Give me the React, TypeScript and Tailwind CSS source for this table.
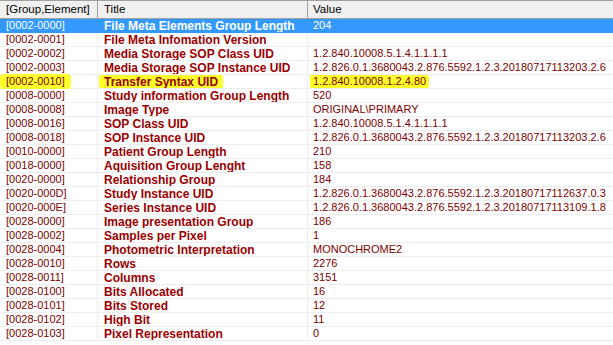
const rows: [string, string, string][] = [
  ["[0002-0000]", "File Meta Elements Group Length", "204"],
  ["[0002-0001]", "File Meta Infomation Version", ""],
  ["[0002-0002]", "Media Storage SOP Class UID", "1.2.840.10008.5.1.4.1.1.1.1"],
  ["[0002-0003]", "Media Storage SOP Instance UID", "1.2.826.0.1.3680043.2.876.5592.1.2.3.20180717113203.2.6"],
  ["[0002-0010]", "Transfer Syntax UID", "1.2.840.10008.1.2.4.80"],
  ["[0008-0000]", "Study information Group Length", "520"],
  ["[0008-0008]", "Image Type", "ORIGINAL\\PRIMARY"],
  ["[0008-0016]", "SOP Class UID", "1.2.840.10008.5.1.4.1.1.1.1"],
  ["[0008-0018]", "SOP Instance UID", "1.2.826.0.1.3680043.2.876.5592.1.2.3.20180717113203.2.6"],
  ["[0010-0000]", "Patient Group Length", "210"],
  ["[0018-0000]", "Aquisition Group Lenght", "158"],
  ["[0020-0000]", "Relationship Group", "184"],
  ["[0020-000D]", "Study Instance UID", "1.2.826.0.1.3680043.2.876.5592.1.2.3.20180717112637.0.3"],
  ["[0020-000E]", "Series Instance UID", "1.2.826.0.1.3680043.2.876.5592.1.2.3.20180717113109.1.8"],
  ["[0028-0000]", "Image presentation Group", "186"],
  ["[0028-0002]", "Samples per Pixel", "1"],
  ["[0028-0004]", "Photometric Interpretation", "MONOCHROME2"],
  ["[0028-0010]", "Rows", "2276"],
  ["[0028-0011]", "Columns", "3151"],
  ["[0028-0100]", "Bits Allocated", "16"],
  ["[0028-0101]", "Bits Stored", "12"],
  ["[0028-0102]", "High Bit", "11"],
  ["[0028-0103]", "Pixel Representation", "0"],
];

const font = { fontFamily: '"Liberation Sans", Arial, sans-serif' };

export default function App() {
  return (
    <div className="w-[613px] h-[345px] overflow-hidden bg-white text-[11px] leading-none" style={font}>
      {/* Header */}
      <div className="flex h-[19px] border-t border-[#a0a0a0] border-b border-b-[#a0a0a0] bg-[#f0f0f0] text-black text-[11.5px]">
        <div className="w-[98px] flex items-center pl-[6px] border-r border-[#a0a0a0]">[Group,Element]</div>
        <div className="w-[210px] flex items-center pl-[6px] border-r border-[#a0a0a0]">Title</div>
        <div className="flex-1 flex items-center pl-[5px]">Value</div>
      </div>

      {/* Rows */}
      {rows.map(([tag, title, value], i) => {
        const selected = i === 0;
        const marked = i === 4;
        return (
          <div
            key={tag}
            className={`flex h-[14px] border-b ${selected ? "bg-[#3399ff] text-white border-[#3399ff]" : "text-[#800000] border-[#eeeeee]"}`}
          >
            <div className={`w-[98px] flex items-center pl-[6px] whitespace-nowrap border-r ${selected ? "border-[#3399ff]" : "border-[#eeeeee]"}`}>
              {marked ? (
                <span className="-ml-[6px] pl-[6px] pr-[6px] py-[2px] rounded-[4px] bg-[#ffff2a]">{tag}</span>
              ) : (
                tag
              )}
            </div>
            <div
              className={`w-[210px] flex items-center pl-[6px] whitespace-nowrap overflow-hidden font-bold text-[12px] border-r ${selected ? "border-[#3399ff]" : "border-[#eeeeee] text-[#9b0000]"}`}
            >
              {marked ? (
                <span className="-ml-[5px] px-[5px] py-[2px] rounded-[4px] bg-[#ffff2a]">{title}</span>
              ) : (
                title
              )}
            </div>
            <div className="flex-1 flex items-center pl-[5px] whitespace-nowrap overflow-hidden">
              {marked ? (
                <span className="-ml-[3px] px-[3px] py-[2px] rounded-[4px] bg-[#ffff2a]">{value}</span>
              ) : (
                value
              )}
            </div>
          </div>
        );
      })}
    </div>
  );
}
